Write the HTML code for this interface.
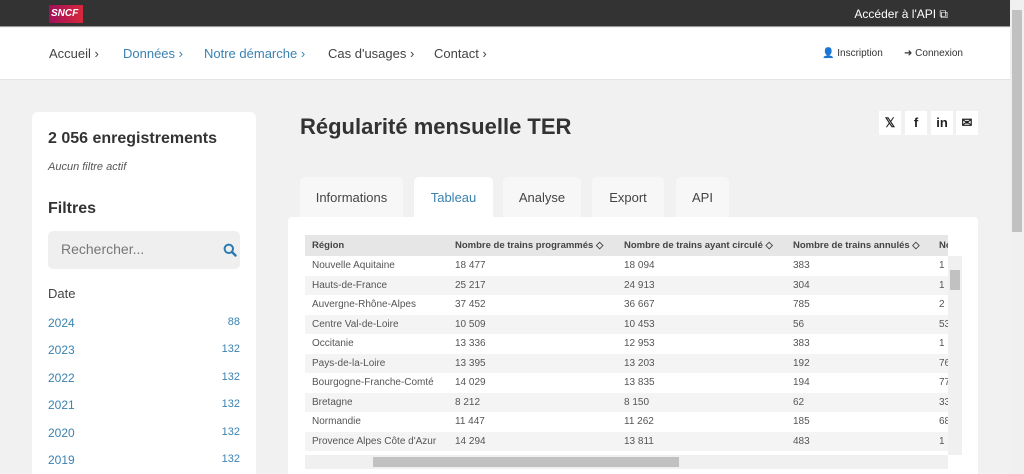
<!DOCTYPE html><html><head><meta charset="utf-8"><style>
*{box-sizing:border-box;margin:0;padding:0}
html{overflow:hidden;height:474px}
body{width:1024px;height:474px;overflow:hidden;background:#f1f1f1;font-family:"Liberation Sans",sans-serif;position:relative;color:#333}
.top{position:absolute;left:0;top:0;width:1010px;height:27px;background:#333;border-bottom:1px solid #999}
.logo{position:absolute;left:49px;top:5px;width:34px;height:18px;background:linear-gradient(90deg,#a0105a,#d8283c);color:#fff;font-size:10px;font-style:italic;font-weight:bold;padding:3px 2px}
.api{position:absolute;right:62px;top:7px;color:#fff;font-size:12px}
.nav{position:absolute;left:0;top:28px;width:1010px;height:52px;background:#fff;border-bottom:1px solid #e3e3e3}
.nav span{position:absolute;top:18px;font-size:13px;color:#444}
.nav .b{color:#3a82b0}
.sb{position:absolute;right:0;top:0;width:14px;height:474px;background:#f0f0f0}
.sb div{position:absolute;left:2px;top:10px;width:10px;height:222px;background:#c1c1c1}
.side{position:absolute;left:32px;top:112px;width:224px;height:380px;background:#fff;border-radius:6px}
.side .t{position:absolute;left:16px;top:18px;font-size:16px;font-weight:bold}
.side .i{position:absolute;left:16px;top:49px;font-size:11px;font-style:italic;color:#555}
.side .f{position:absolute;left:16px;top:88px;font-size:16px;font-weight:bold}
.srch{position:absolute;left:16px;top:119px;width:192px;height:38px;background:#efefef;border-radius:5px;color:#777;font-size:14px;padding:10px 13px}
.side .d{position:absolute;left:16px;top:174px;font-size:13px;color:#444}
.yr{position:absolute;left:16px;width:192px;font-size:12px;color:#3a82b0}
.yr b{position:absolute;right:0;font-weight:normal;font-size:11px}
h1{position:absolute;left:300px;top:114px;font-size:22px;font-weight:bold;color:#333}
.soc{position:absolute;top:111px;width:22px;height:24px;background:#fff;font-size:13px;font-weight:bold;text-align:center;line-height:24px;color:#222}
.tab{position:absolute;top:177px;height:41px;background:#f7f7f7;border-radius:5px 5px 0 0;font-size:13px;color:#444;text-align:center;line-height:41px}
.tab.a{background:#fff;color:#3a82b0}
.panel{position:absolute;left:288px;top:217px;width:690px;height:260px;background:#fff;border-radius:4px}
table{position:absolute;left:305px;top:235px;border-collapse:collapse;font-size:10px;color:#555;width:643px;table-layout:fixed}
th{background:#e6e6e6;text-align:left;font-weight:bold;color:#444;height:21px;padding-left:7px;white-space:nowrap;overflow:hidden;font-size:9.5px}
td{height:19.5px;padding-left:7px;white-space:nowrap;overflow:hidden}
tr:nth-child(odd) td{background:#f4f4f4}
.vs{position:absolute;left:948px;top:256px;width:14px;height:199px;background:#f0f0f0}
.vs div{position:absolute;left:2px;top:14px;width:10px;height:20px;background:#c1c1c1}
.hs{position:absolute;left:305px;top:455px;width:643px;height:14px;background:#f0f0f0}
.hs div{position:absolute;left:68px;top:2px;width:306px;height:10px;background:#c1c1c1}
</style></head><body>
<div class="top"><div class="logo">SNCF</div><div class="api">Accéder à l'API ⧉</div></div>
<div class="nav">
<span style="left:49px">Accueil ›</span><span class="b" style="left:123px">Données ›</span><span class="b" style="left:204px">Notre démarche ›</span><span style="left:328px">Cas d'usages ›</span><span style="left:434px">Contact ›</span>
<span style="left:822px;top:20px;font-size:10px;color:#333">👤 Inscription</span><span style="left:904px;top:20px;font-size:10px;color:#333">➜ Connexion</span>
</div>
<div class="sb"><div></div></div>
<div class="side">
<div class="t">2 056 enregistrements</div><div class="i">Aucun filtre actif</div><div class="f">Filtres</div>
<div class="srch">Rechercher...<svg style="position:absolute;right:3px;top:12px" width="14" height="14" viewBox="0 0 14 14"><circle cx="5.8" cy="5.8" r="4.2" fill="none" stroke="#2a7ab0" stroke-width="2"/><path d="M9 9l3.5 3.5" stroke="#2a7ab0" stroke-width="2.4" stroke-linecap="round"/></svg></div>
<div class="d">Date</div>
<div class="yr" style="top:204px">2024<b>88</b></div>
<div class="yr" style="top:231px">2023<b>132</b></div>
<div class="yr" style="top:259px">2022<b>132</b></div>
<div class="yr" style="top:286px">2021<b>132</b></div>
<div class="yr" style="top:314px">2020<b>132</b></div>
<div class="yr" style="top:341px">2019<b>132</b></div>
</div>
<h1>Régularité mensuelle TER</h1>
<div class="soc" style="left:879px">𝕏</div><div class="soc" style="left:905px">f</div><div class="soc" style="left:931px">in</div><div class="soc" style="left:956px">✉</div>
<div class="tab" style="left:300px;width:103px">Informations</div>
<div class="tab a" style="left:414px;width:79px">Tableau</div>
<div class="tab" style="left:503px;width:78px">Analyse</div>
<div class="tab" style="left:592px;width:72px">Export</div>
<div class="tab" style="left:676px;width:53px">API</div>
<div class="panel"></div>
<table>
<colgroup><col style="width:143px"><col style="width:169px"><col style="width:169px"><col style="width:146px"><col style="width:16px"></colgroup>
<tr><th>Région</th><th>Nombre de trains programmés ◇</th><th>Nombre de trains ayant circulé ◇</th><th>Nombre de trains annulés ◇</th><th>Nom</th></tr>
<tr><td>Nouvelle Aquitaine</td><td>18 477</td><td>18 094</td><td>383</td><td>1</td></tr>
<tr><td>Hauts-de-France</td><td>25 217</td><td>24 913</td><td>304</td><td>1</td></tr>
<tr><td>Auvergne-Rhône-Alpes</td><td>37 452</td><td>36 667</td><td>785</td><td>2</td></tr>
<tr><td>Centre Val-de-Loire</td><td>10 509</td><td>10 453</td><td>56</td><td>53</td></tr>
<tr><td>Occitanie</td><td>13 336</td><td>12 953</td><td>383</td><td>1</td></tr>
<tr><td>Pays-de-la-Loire</td><td>13 395</td><td>13 203</td><td>192</td><td>76</td></tr>
<tr><td>Bourgogne-Franche-Comté</td><td>14 029</td><td>13 835</td><td>194</td><td>77</td></tr>
<tr><td>Bretagne</td><td>8 212</td><td>8 150</td><td>62</td><td>33</td></tr>
<tr><td>Normandie</td><td>11 447</td><td>11 262</td><td>185</td><td>68</td></tr>
<tr><td>Provence Alpes Côte d'Azur</td><td>14 294</td><td>13 811</td><td>483</td><td>1</td></tr>
</table>
<div class="vs"><div></div></div>
<div class="hs"><div></div></div>
</body></html>
